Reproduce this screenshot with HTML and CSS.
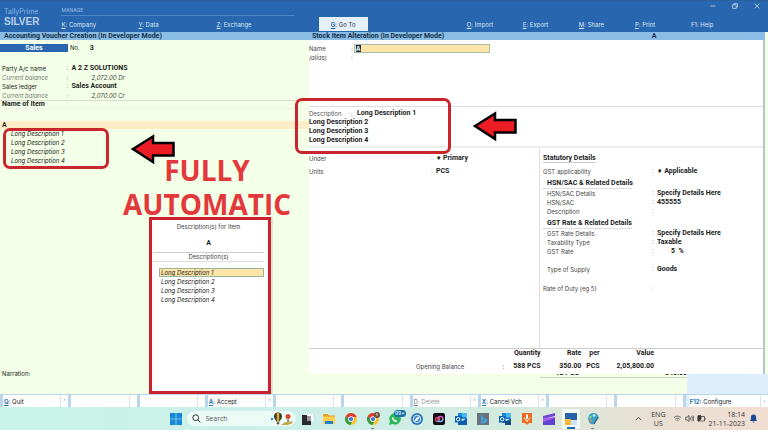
FILE: index.html
```html
<!DOCTYPE html>
<html lang="en">
<head>
<meta charset="utf-8">
<title>TallyPrime Silver</title>
<link rel="stylesheet" href="styles.css">
</head>
<body>
<header class="topbar">
  <div class="brand"><span class="brand-name">TallyPrime</span><strong class="brand-tier">SILVER</strong></div>
  <div class="topbar-body">
    <div class="caption">
      <span class="manage">MANAGE</span>
      <div class="window-controls">
        <button aria-label="Minimize"><svg viewBox="0 0 6 6"><path d="M0.5 3h5"/></svg></button>
        <button aria-label="Restore"><svg viewBox="0 0 6 6"><path d="M.6 1.8h3.6v3.6H.6zM1.8 1.6V.6h3.6v3.6h-1"/></svg></button>
        <button aria-label="Close"><svg viewBox="0 0 6 6"><path d="M.6.6l4.800 4.800M5.400.6L.6 5.400"/></svg></button>
      </div>
    </div>
    <nav class="menu">
      <button><u>K</u>: Company</button>
      <button><u>Y</u>: Data</button>
      <button><u>Z</u>: Exchange</button>
      <button class="goto"><u>G</u>: Go To</button>
      <button><u>O</u>: Import</button>
      <button><u>E</u>: Export</button>
      <button><u>M</u>: Share</button>
      <button><u>P</u>: Print</button>
      <button>F1: Help</button>
    </nav>
  </div>
</header>

<main class="workspace">
  <section class="voucher">
    <h2 class="strip">Accounting Voucher Creation (In Developer Mode)</h2>
    <div class="voucher-type"><span class="badge">Sales</span><span>No.</span><b>3</b></div>
    <dl class="ledgers">
      <dt>Party A/c name</dt><dd>A 2 Z SOLUTIONS</dd>
      <dt class="balance">Current balance</dt><dd class="balance">2,072.00 Dr</dd>
      <dt>Sales ledger</dt><dd>Sales Account</dd>
      <dt class="balance">Current balance</dt><dd class="balance">2,070.00 Cr</dd>
    </dl>
    <h3 class="items-head">Name of Item</h3>
    <div class="item-row">A</div>
    <ul class="item-lines">
      <li>Long Description 1</li><li>Long Description 2</li><li>Long Description 3</li><li>Long Description 4</li>
    </ul>
    <label class="narration">Narration: <input type="text"></label>

    <div class="mark mark-items"></div>
    <svg class="arrow arrow-items" viewBox="0 0 45 30"><path d="M2 15L22 2.500V9H42.500V21.500H22V28z"/></svg>
    <p class="callout">FULLY<br>AUTOMATIC</p>
    <div class="popup">
      <h3>Description(s) for Item</h3>
      <b class="popup-item">A</b>
      <h4>Description(s)</h4>
      <div class="popup-fields">
        <input class="active" aria-label="Description 1" value="Long Description 1">
        <input aria-label="Description 2" value="Long Description 2">
        <input aria-label="Description 3" value="Long Description 3">
        <input aria-label="Description 4" value="Long Description 4">
      </div>
    </div>
  </section>

  <section class="stock">
    <div class="strip stock-strip"><h2>Stock Item Alteration (In Developer Mode)</h2><b>A</b></div>
    <div class="identity">
      <label for="item-name">Name</label><span>:</span><input id="item-name" value="A">
      <label for="item-alias"><i>(alias)</i></label><span>:</span><input id="item-alias" class="plain" value="">
    </div>
    <div class="descriptions">
      <div class="first-line"><span>Description</span><i>:</i><b>Long Description 1</b></div>
      <b>Long Description 2</b><b>Long Description 3</b><b>Long Description 4</b>
    </div>
    <div class="details">
      <dl class="general">
        <dt>Under</dt><dd><span class="diamond">♦</span> Primary</dd>
        <dt>Units</dt><dd>PCS</dd>
      </dl>
      <div class="statutory">
        <h3>Statutory Details</h3>
        <dl><dt>GST applicability</dt><dd><span class="diamond">♦</span> Applicable</dd></dl>
        <h4>HSN/SAC &amp; Related Details</h4>
        <dl class="nested">
          <dt>HSN/SAC Details</dt><dd>Specify Details Here</dd>
          <dt>HSN/SAC</dt><dd>455555</dd>
          <dt>Description</dt><dd></dd>
        </dl>
        <h4>GST Rate &amp; Related Details</h4>
        <dl class="nested">
          <dt>GST Rate Details</dt><dd>Specify Details Here</dd>
          <dt>Taxability Type</dt><dd>Taxable</dd>
          <dt>GST Rate</dt><dd class="rate">5 &nbsp;%</dd>
        </dl>
        <dl class="nested supply"><dt>Type of Supply</dt><dd>Goods</dd></dl>
        <dl class="duty"><dt>Rate of Duty (eg 5)</dt><dd></dd></dl>
      </div>
    </div>
    <table class="opening">
      <colgroup><col class="c-label"><col class="c-qty"><col class="c-rate"><col class="c-per"><col class="c-value"><col></colgroup>
      <tr><td></td><th>Quantity</th><th>Rate</th><th>per</th><th>Value</th><td></td></tr>
      <tr><td><span class="opening-label"><span>Opening Balance</span><span>:</span></span></td><th>588 PCS</th><th>350.00</th><th>PCS</th><th>2,05,800.00</th><td></td></tr>
    </table>
    <div class="mark mark-stock"></div>
    <svg class="arrow arrow-stock" viewBox="0 0 45 30"><path d="M2 15L22 2.500V9H42.500V21.500H22V28z"/></svg>
  </section>

  <div class="totals"><div class="totals-row"><b>12 PCS</b><b>840.00</b></div></div>
  <aside class="side"></aside>
</main>

<footer class="actions">
  <button><span><u>Q</u>: Quit</span><i>^</i></button>
  <button><span></span><i></i></button>
  <button><span></span><i></i></button>
  <button><span><u>A</u>: Accept</span><i>^</i></button>
  <button><span></span><i></i></button>
  <button><span></span><i></i></button>
  <button class="off"><span><u>D</u>: Delete</span><i>^</i></button>
  <button><span><u>X</u>: Cancel Vch</span><i>^</i></button>
  <button><span></span><i></i></button>
  <button><span></span><i></i></button>
  <button class="configure"><span><em>F12:</em> Configure</span><i>‹</i></button>
</footer>

<div class="taskbar">
  <div class="apps">
    <button class="start" aria-label="Start"><svg viewBox="0 0 12 12"><path fill="#1687d9" d="M0 0h5.700v5.700H0zM6.300 0H12v5.700H6.300zM0 6.300h5.700V12H0zM6.300 6.300H12V12H6.300z"/></svg></button>
    <label class="search">
      <svg class="lens" viewBox="0 0 9 9"><circle cx="3.700" cy="3.700" r="2.900"/><path d="M5.900 5.900L8.400 8.400"/></svg>
      <input type="text" placeholder="Search" aria-label="Search">
      <svg class="balloons" viewBox="0 0 24 14"><circle cx="2" cy="7" r="1.200" fill="#2586d0"/><path fill="#37412f" d="M4 4.500a4 4 0 0 1 8 0C12 7 10 8 9.500 9.500h-3C6 8 4 7 4 4.500z"/><path fill="#e6a72d" d="M6.800 1h2.400v8H6.800z"/><path fill="#554027" d="M6.800 10.300h2.400v2H6.800z"/><path fill="#c4a648" d="M11 13c3-3 7-4 12-3.500-1 3-6 4-12 3.500z"/><circle cx="18" cy="4.500" r="2.500" fill="#d14a29"/><path fill="#70502a" d="M17.200 7.500h1.600v2h-1.600z"/></svg>
    </label>
    <button aria-label="Task view"><svg viewBox="0 0 14 14"><path fill="#fff" d="M5 2h8v7H5z"/><path fill="#2b2b2d" d="M2 3h5v6h4v4H2z"/><path fill="#999" d="M7 4h4v5H7z"/></svg></button>
    <button aria-label="File Explorer"><svg viewBox="0 0 14 14"><path fill="#e3a21a" d="M1 2h4.500L7 3.500h6V8H1z"/><path fill="#ffd14f" d="M1 4.500h12V12H1z"/><path fill="#2580cf" d="M3 9h8v3H3z"/></svg></button>
    <button aria-label="Chrome"><svg viewBox="0 0 14 14"><circle cx="7" cy="7" r="6" fill="#f6c42c"/><path fill="#df3f32" d="M1.800 4A6 6 0 0 1 12.600 5H7L4.400 8.500z"/><path fill="#2f9d50" d="M1.800 4l3.700 6L8 9.800 6.500 13A6 6 0 0 1 1.800 4z"/><circle cx="7" cy="7" r="2.800" fill="#fff"/><circle cx="7" cy="7" r="2.100" fill="#3978df"/></svg></button>
    <button class="running" aria-label="Chrome profile"><svg viewBox="0 0 14 14"><circle cx="7" cy="7" r="6" fill="#f6c42c"/><path fill="#df3f32" d="M1.800 4A6 6 0 0 1 12.600 5H7L4.400 8.500z"/><path fill="#2f9d50" d="M1.800 4l3.700 6L8 9.800 6.500 13A6 6 0 0 1 1.800 4z"/><circle cx="7" cy="7" r="2.800" fill="#fff"/><circle cx="7" cy="7" r="2.100" fill="#3978df"/><circle cx="11" cy="3" r="3" fill="#6b4b43"/><circle cx="11" cy="2.500" r="1.200" fill="#d5a38d"/></svg></button>
    <button class="whatsapp" aria-label="WhatsApp"><svg viewBox="0 0 14 14"><path fill="#2fb75b" d="M1 13l1-3.500A5.800 5.800 0 1 1 4.600 12z"/><path fill="none" stroke="#fff" stroke-width="1.400" d="M4.500 5.500c.5 2.500 2 3.700 4.500 4"/></svg><span>99+</span></button>
    <button aria-label="Compass"><svg viewBox="0 0 14 14"><circle cx="7" cy="7" r="6" fill="#2a73bd"/><circle cx="7" cy="7" r="3.800" fill="#3a86d0" stroke="#d6eaf8"/><path fill="#fff" d="M10 4L8 8 4 10l2-4z"/></svg></button>
    <button aria-label="Creative Cloud"><svg viewBox="0 0 14 14"><rect x="1" y="1" width="12" height="12" rx="2" fill="#0c0b10"/><g fill="none" stroke-width="1.300"><circle cx="5.500" cy="7.500" r="2" stroke="#e24a50"/><circle cx="8.500" cy="7" r="2.500" stroke="#d857c0"/><path stroke="#54b6e8" d="M5.500 9.500h3.500a2.500 2.500 0 0 0 2-2.500"/></g></svg></button>
    <button aria-label="Outlook"><svg viewBox="0 0 14 14"><path fill="#1c86d6" d="M4 1h8.500v6H4z"/><path fill="#45b9f0" d="M8 1h4.500v4H8z"/><path fill="#125fae" d="M4 6l4.500 3L13 6v7H4z"/><path fill="#0b62b8" d="M1 4h6.500v6.500H1z"/><circle cx="4.200" cy="7.200" r="1.700" fill="none" stroke="#fff"/></svg></button>
    <button aria-label="Bing"><svg viewBox="0 0 14 14"><path fill="#68727b" d="M1 1h12v12H1z"/><path fill="#3fa3e7" d="M5 3l2 1v4.500l-2 2zM7 5.500l4 2v2L6.500 12 5 10.500l3.500-2z"/></svg></button>
    <button aria-label="Outlook new"><svg viewBox="0 0 14 14"><path fill="#1c86d6" d="M4 1h8.500v6H4z"/><path fill="#45b9f0" d="M8 1h4.500v4H8z"/><path fill="#125fae" d="M4 6l4.500 3L13 6v5H4z"/><path fill="#0b62b8" d="M1 4h6.500v6.500H1z"/><circle cx="4.200" cy="7.200" r="1.700" fill="none" stroke="#fff"/><path fill="#174a80" d="M7 9h6v4H7z"/></svg></button>
    <button aria-label="Feedback"><svg viewBox="0 0 14 14"><path fill="#ee6c1d" d="M2 1h10v10H9l-2 2-2-2H2z"/><path fill="#fff" d="M6 2.500h2v4.500H6z"/><path fill="none" stroke="#fff" d="M4.500 5.500c0 4 5 4 5 0M7 8.500V10"/></svg></button>
    <button aria-label="Clipchamp"><svg viewBox="0 0 14 14"><path fill="#7047d7" d="M1 4l12-3v3L1 7z"/><path fill="#a95de8" d="M1 6.500L13 5v8H1z"/><path fill="#6340ce" d="M1 10l12-4v7H1z"/></svg></button>
    <button class="current" aria-label="TallyPrime"><svg viewBox="0 0 14 14"><path fill="#2863aa" d="M1 1h12v7H1z"/><path fill="#f5ba36" d="M1 7h6v6H1z"/><path fill="#cde1f2" d="M7 8h6v5H7z"/></svg></button>
    <button class="running" aria-label="Paint"><svg viewBox="0 0 14 14"><path fill="#35a4cf" d="M7 1c4 0 6 2.500 5.500 5S9 8 9 10s-2 3-4 2C1 10.500 1 1 7 1z"/><circle cx="4.500" cy="5" r="1.200" fill="#8edb70"/><circle cx="8" cy="3.500" r="1.200" fill="#e8f5f5"/><circle cx="4.500" cy="8.500" r="1.200" fill="#e08b50"/><path stroke="#486176" stroke-width="1.500" d="M12 5L8 12"/></svg></button>
  </div>
  <div class="tray">
    <svg class="chevron" viewBox="0 0 8 8"><path d="M1.500 5.500L4 3l2.500 2.500"/></svg>
    <span class="lang">ENG<br>US</span>
    <div class="status">
      <svg viewBox="0 0 9 9"><path d="M1 3.700c2-2 5-2 7 0M2.300 5.200c1.300-1.300 3.100-1.300 4.400 0M3.600 6.600c.6-.5 1.200-.5 1.800 0"/></svg>
      <svg viewBox="0 0 9 9"><path d="M.7 3.200h1.300L4 1.500v6L2 5.800H.7zM5.300 3.200v2.600M6.600 2.300c.8 1.400.8 3 0 4.400M7.900 1.500c1 2 1 4 0 6"/></svg>
      <svg viewBox="0 0 9 9"><path d="M1 2.500h6.500v4.500H1zM8.300 4v1.500"/><path fill="#333" d="M1 1.500h3V5l-2 2H1z"/></svg>
    </div>
    <time>18:14<br>21-11-2023</time>
    <svg class="bell" viewBox="0 0 8 9"><path fill="#174d93" d="M4 .5a2.600 2.600 0 0 1 2.600 2.700v2L7.500 7h-7l.9-1.800v-2A2.600 2.600 0 0 1 4 .5zM3 7.500h2a1 1 0 0 1-2 0z"/></svg>
  </div>
</div>
</body>
</html>
```
FILE: styles.css
```css
* { box-sizing: border-box; }
body, h2, h3, h4, p, dl, dd, ul { margin: 0; padding: 0; }
h2, h3, h4 { font-size: 6px; }
ul { list-style: none; }

body {
  display: flex;
  flex-direction: column;
  min-height: 100vh;
  background: #f3ffe7;
  color: #222;
  font: 6px/9px Inter, "Liberation Sans", sans-serif;
}
button, input { border: 0; padding: 0; margin: 0; background: none; color: inherit; font: inherit; min-width: 0; outline: 0; }
u { text-underline-offset: 1px; text-decoration-thickness: 1px; }
h2, h3, h4, b, dd, th, .badge, .item-row { font-family: Roboto, sans-serif; font-size: 7px; }

/* Top bar */
.topbar { display: flex; height: 32px; background: #2866b0; color: #d9e8f6; border-top: 1px solid #2b5f9d; }
.brand { width: 8%; padding: 6px 0 0 4px; display: flex; flex-direction: column; }
.brand-name { font-size: 7px; line-height: 10px; color: #86b3e2; }
.brand-tier { font: bold 10px/10px "Liberation Sans", sans-serif; color: #b9d0ea; }
.topbar-body { flex: 1; }
.caption { display: flex; justify-content: space-between; height: 15px; }
.manage { width: 33%; padding-top: 5px; border-bottom: 1px solid #4d85c5; font-size: 5px; color: #9cc0e8; }
.window-controls { display: flex; gap: 16px; padding: 1px 8px 0 0; height: 8px; }
.window-controls svg { display: block; width: 6px; height: 6px; fill: none; stroke: #d9e8f6; stroke-width: .7; }
.menu { display: grid; grid-template-columns: 77fr 78fr 102fr 148fr 56fr 56fr 56fr 56fr 77fr; align-items: center; padding: 1px 0; }
.menu button { justify-self: start; height: 14px; white-space: nowrap; }
.menu .goto { width: 49px; height: 14px; background: #e4f1fb; color: #333; }
.goto u { color: #1d62ac; font-weight: bold; }

/* Workspace */
.workspace { flex: 1; display: grid; grid-template-columns: minmax(0, 309fr) minmax(0, 378fr) minmax(0, 81fr); grid-template-rows: 1fr 20px; }
.voucher { grid-row: 1 / 3; position: relative; display: flex; flex-direction: column; }
.strip { height: 8px; padding-left: 4px; background: #8abde5; color: #102b46; line-height: 8px; }
.voucher-type { display: flex; margin-top: 4px; line-height: 8px; gap: 2px; }
.voucher-type b { margin-left: 8px; }
.badge { width: 22%; background: #2866b0; color: #fff; font-weight: bold; text-align: center; }
.ledgers { display: grid; grid-template-columns: 21% 1fr; padding: 12px 0 0 2px; }
dd { font-weight: bold; }
dd::before { content: ":"; display: inline-block; width: 5px; font-weight: normal; color: #888; }
.ledgers .balance { color: #777; font: italic 6px/9px Inter, sans-serif; }
.ledgers dd.balance { color: #444; }
.ledgers dd.balance::before { width: 25px; }
.items-head { border-top: 1px solid #d7dccf; border-bottom: 1px solid #edf3e4; padding-left: 2px; line-height: 7px; }
.item-row { margin-top: 12px; padding-left: 2px; background: #ffedc9; font-weight: bold; line-height: 8px; }
.item-lines { padding-left: 11px; font-style: italic; }
.narration { display: flex; margin-top: auto; padding: 0 0 16px 2px; }

.mark { position: absolute; border: 3px solid #c9252d; border-radius: 7px; }
.mark-items { left: 3px; top: 96px; width: 106px; height: 41px; }
.mark-stock { left: -14px; top: 66px; width: 156px; height: 56px; }
.arrow { position: absolute; width: 45px; height: 30px; fill: #ec1c24; stroke: #000; stroke-width: 2.5; }
.arrow-items { left: 131px; top: 102px; }
.arrow-stock { left: 164px; top: 79px; }
.callout { position: absolute; left: 123px; top: 121px; color: #e3393d; font: bold 28px/34px "Open Sans", sans-serif; text-align: center; }

.popup { position: absolute; left: 149px; top: 185px; bottom: 0; width: 122px; border: 3px solid #cc202b; background: #fff; padding: 2px 4px 0 1px; text-align: center; box-shadow: 2px 0 #e3e3dc; }
.popup h3, .popup h4 { font: 6px/9px Inter, sans-serif; }
.popup-item { display: block; margin: 8px 0 4px; }
.popup h4 { border-top: 1px solid #ccc; border-bottom: 1px solid #ddd; line-height: 8px; }
.popup-fields { display: flex; flex-direction: column; padding: 6px 0 0 6px; }
.popup-fields input { width: 100%; height: 9px; padding: 0 2px; font-style: italic; }
.popup-fields .active { background: #ffe5a8; outline: 1px solid #9bb59a; outline-offset: -1px; }

/* Stock item panel */
.stock { grid-column: 2 / 4; position: relative; display: flex; flex-direction: column; margin-right: 3px; background: #fff; border-right: 2px solid #b9c3cc; }
.stock-strip { display: grid; grid-template-columns: 75% 1fr; padding-left: 3px; margin-right: -2px; }
.stock-strip h2 { line-height: 8px; }
.identity { display: grid; grid-template-columns: 42px 3px 30%; padding-top: 4px; height: 66px; align-content: start; line-height: 9px; }
.identity span { color: #888; }
.identity input { height: 9px; padding: 0 2px; font-weight: bold; }
.identity #item-name { border: 1px solid #a9bca5; color: #fff; background: linear-gradient(#17264d, #17264d) 1px 0 / 5px 7px no-repeat #ffe5a8; padding: 0 1px; line-height: 7px; }
.descriptions { display: flex; flex-direction: column; border-top: 1px solid #ddd; padding: 2px 0 1px; height: 40px; }
.first-line { display: flex; color: #555; }
.first-line span { width: 42px; }
.first-line i { width: 6px; font-style: normal; color: #888; }
.first-line b { color: #222; }
.details { flex: 1; display: grid; grid-template-columns: 230fr 224fr; border-top: 2px solid #eee; }
.details dt, .identity label, .popup h3, .popup h4 { color: #444; }
.details dl { display: grid; align-content: start; }
.diamond { font-family: "DejaVu Sans", sans-serif; font-size: 6px; line-height: 6px; }
.general { grid-template-columns: 53% 1fr; padding-top: 6px; row-gap: 4px; }
.statutory { border-left: 1px solid #ddd; padding: 6px 0 0 3px; }
.statutory h3 { text-decoration: underline #ccc; text-underline-offset: 2px; }
.statutory dl { grid-template-columns: 109px 1fr; margin-top: 4px; }
.statutory h4 { width: 90px; margin: 3px 0 0 -1px; padding-left: 5px; border-bottom: 1px solid #ddd; white-space: nowrap; }
.statutory .nested { grid-template-columns: 105px 1fr; margin: 0 0 0 4px; }
.statutory .supply { margin-top: 9px; }
.statutory .duty { margin-top: 10px; }
.rate::before { width: 19px; }
.opening { border-collapse: collapse; border-top: 1px solid #ccc; table-layout: fixed; width: 100%; height: 26px; }
.opening td, .opening th { padding: 0; text-align: right; vertical-align: top; line-height: 9px; white-space: nowrap; }
.c-label { width: 43%; }
.c-qty { width: 8%; }
.c-rate { width: 9%; }
.c-per { width: 4%; }
.c-value { width: 12%; }
.opening-label { display: flex; justify-content: space-between; padding-left: 107px; color: #444; }

.totals { grid-column: 2; }
.totals-row { display: flex; justify-content: space-between; align-items: flex-end; width: 39%; height: 4px; margin-left: auto; padding-left: 16px; overflow: hidden; border-bottom: 1px solid #ccd3c4; line-height: 7px; }
.side { grid-column: 3; background: #ddeefc; }

/* Action buttons */
.actions { display: grid; grid-template-columns: repeat(10, minmax(0, 65fr)) minmax(0, 82fr); gap: 3px; height: 13px; padding: 1px 0 1px 3px; background: #b8d7ec; }
.actions button { display: flex; align-items: center; background: #fff; text-align: left; }
.actions span { flex: 1; padding-left: 1px; white-space: nowrap; }
.actions .configure { border-left: 3px solid #ddeefc; }
.actions i { align-self: stretch; width: 8px; border-left: 1px solid #d9e5ee; color: #9aa; font-style: normal; text-align: center; line-height: 12px; }
.actions u, .actions em { color: #2477b8; font-style: normal; font-weight: bold; }
.actions .off { color: #999; }
.actions .off u { color: #777; font-weight: normal; }

/* Taskbar */
.taskbar { display: grid; grid-template-columns: 1fr auto 1fr; align-items: center; height: 23px; background: linear-gradient(90deg, #c9f3e9, #cdeee8 45%, #d3ebdf 65%, #e8e0d2 85%, #f2ddd3); }
.apps { grid-column: 2; display: flex; align-items: center; }
.apps button { position: relative; display: flex; justify-content: center; align-items: center; width: 22px; height: 20px; }
.apps button > svg { width: 14px; height: 14px; }
.apps .start > svg { width: 12px; height: 12px; }
.search { display: flex; align-items: center; gap: 5px; width: 109px; height: 15px; padding: 0 2px 0 5px; border-radius: 8px; background: #edfbf6; }
.search input { flex: 1; width: 0; font: 7px/10px "Open Sans", sans-serif; }
.search input::placeholder { color: #555; opacity: 1; }
.lens { width: 9px; height: 9px; fill: none; stroke: #333; }
.balloons { width: 24px; height: 14px; }
.apps .running::after, .apps .current::after { content: ""; position: absolute; bottom: 0; width: 3px; height: 1px; background: #777; }
.apps .current::after { width: 8px; height: 2px; background: #1b6cb5; }
.apps .current { background: #f1f9f6 content-box; padding: 0 2px; }
.whatsapp span { position: absolute; right: 0; top: 1px; padding: 0 1px; border-radius: 4px; background: #1673a8; color: #fff; font-size: 5px; line-height: 7px; }
.tray { display: flex; align-items: center; justify-content: flex-end; gap: 8px; padding-right: 10px; color: #333; font: 7px/9px "Open Sans", sans-serif; }
.tray svg { width: 9px; height: 9px; fill: none; stroke: #444; stroke-width: .8; }
.lang { text-align: center; }
.status { display: flex; gap: 3px; }
.tray time { text-align: right; margin-left: -6px; }
.tray .bell { stroke: none; margin-left: -4px; }
```
